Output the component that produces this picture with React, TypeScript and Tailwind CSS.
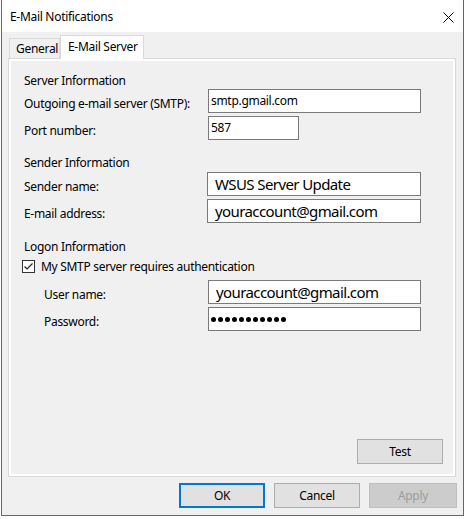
import React from "react";

function Field({
  label,
  labelWidth = 184,
  indent = 0,
  children,
}: {
  label: string;
  labelWidth?: number;
  indent?: number;
  children: React.ReactNode;
}) {
  return (
    <div className="flex items-start">
      <span
        className="pt-[7px] leading-[16px] whitespace-nowrap"
        style={{ width: labelWidth, marginLeft: indent }}>
        {label}
      </span>
      {children}
    </div>
  );
}

function TextBox({
  value,
  width = 213,
  big = false,
}: {
  value: string;
  width?: number;
  big?: boolean;
}) {
  return (
    <div
      className={
        big
          ? "h-[24px] border border-[#7a7a7a] bg-white flex items-center pl-[7px] text-[15px] tracking-[-0.6px] leading-none"
          : "h-[24px] border border-[#7a7a7a] bg-white flex items-center pl-[2px] text-[12px] leading-none"
      }
      style={{ width }}>
      {value}
    </div>
  );
}

function Button({
  label,
  kind = "normal",
  width = 86,
}: {
  label: string;
  kind?: "normal" | "default" | "disabled";
  width?: number;
}) {
  const styles = {
    normal: "border border-[#adadad] bg-[#e1e1e1] text-black",
    default: "border-2 border-[#0078d7] bg-[#e1e1e1] text-black",
    disabled: "border border-[#bfbfbf] bg-[#cccccc] text-[#9d9d9d]",
  };
  return (
    <div
      className={`h-[25px] flex items-center justify-center ${styles[kind]}`}
      style={{ width }}>
      {label}
    </div>
  );
}

export default function App() {
  return (
    <div className="w-[466px] h-[519px] bg-white font-['Noto_Sans',sans-serif] text-[12px] tracking-[-0.3px] text-black">
      <div className="ml-[1px] w-[463px] h-[516px] border-x border-b border-[#1c79d0] bg-[#f0f0f0] flex flex-col">
        {/* title bar */}
        <div className="h-[32px] bg-white flex items-center justify-between pl-[8px] pr-[9px] pt-[2px]">
          <span className="leading-[16px]">E-Mail Notifications</span>
          <svg width="11" height="11" viewBox="0 0 11 11">
            <path d="M0.5 0.5 L10.5 10.5 M10.5 0.5 L0.5 10.5" stroke="#000" strokeWidth="1" />
          </svg>
        </div>

        {/* tabs */}
        <div className="h-[26px] flex items-end pl-[7px]">
          <div className="h-[20px] w-[51px] border border-b-0 border-[#d9d9d9] bg-[#f0f0f0] flex items-center pl-[6px]">
            General
          </div>
          <div className="relative z-10 h-[24px] w-[84px] -mb-px border border-b-0 border-[#d9d9d9] bg-white flex items-center pl-[7px] pb-[1px]">
            E-Mail Server
          </div>
        </div>

        {/* tab panel */}
        <div className="ml-[6px] w-[448px] h-[419px] border border-[#d9d9d9]">
          <div className="h-full border-2 border-white flex flex-col pl-[13px] pt-[12px] pr-[10px] pb-[10px]">
            <div className="leading-[16px]">Server Information</div>
            <div className="flex flex-col gap-[3px]">
              <Field label="Outgoing e-mail server (SMTP):">
                <TextBox value="smtp.gmail.com" />
              </Field>
              <Field label="Port number:">
                <TextBox value="587" width={91} />
              </Field>
            </div>

            <div className="mt-[15px] leading-[16px]">Sender Information</div>
            <div className="mt-[1px] flex flex-col gap-[3px]">
              <Field label="Sender name:" labelWidth={183}>
                <TextBox value="WSUS Server Update" big width={214} />
              </Field>
              <Field label="E-mail address:" labelWidth={183}>
                <TextBox value="youraccount@gmail.com" big width={214} />
              </Field>
            </div>

            <div className="mt-[16px] leading-[16px]">Logon Information</div>
            <div className="mt-[3px] flex items-center -ml-[2px] leading-[16px]">
              <div className="w-[13px] h-[13px] border border-[#333] bg-white flex items-center justify-center">
                <svg width="11" height="11" viewBox="0 0 11 11">
                  <path d="M1.5 5.5 L4 8 L9.5 2.5" fill="none" stroke="#222" strokeWidth="1.2" />
                </svg>
              </div>
              <span className="ml-[6px] pt-[1px]">My SMTP server requires authentication</span>
            </div>
            <div className="mt-[5px] flex flex-col gap-[3px]">
              <Field label="User name:" indent={20} labelWidth={164}>
                <TextBox value="youraccount@gmail.com" big />
              </Field>
              <Field label="Password:" indent={20} labelWidth={164}>
                <div className="w-[213px] h-[24px] border border-[#7a7a7a] bg-white flex items-center gap-[2px] pl-[2px]">
                  {Array.from({ length: 11 }).map((_, i) => (
                    <span key={i} className="w-[5px] h-[5px] rounded-full bg-black" />
                  ))}
                </div>
              </Field>
            </div>

            <div className="flex-1" />
            <div className="flex justify-end">
              <Button label="Test" />
            </div>
          </div>
        </div>

        {/* dialog buttons */}
        <div className="mt-[6px] flex justify-end gap-[9px] pr-[6px]">
          <Button label="OK" kind="default" />
          <Button label="Cancel" />
          <Button label="Apply" kind="disabled" width={88} />
        </div>
      </div>
    </div>
  );
}
